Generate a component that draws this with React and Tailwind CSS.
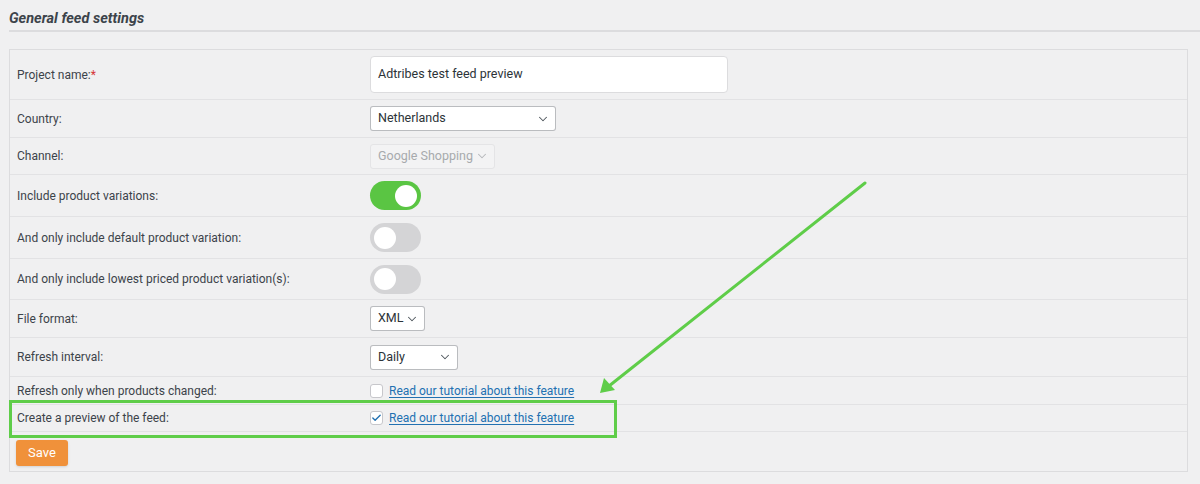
import { ChevronDown, Check } from 'lucide-react';

const Row = ({ label, h, children, required }) => (
  <div className={`flex items-center border-b border-[#e2e2e4] ${h}`}>
    <div className="w-[360px] shrink-0 pl-[7px] text-[12px] text-[#3c434a]">
      {label}
      {required && <span className="text-[#d63638]">*</span>}
    </div>
    <div className="flex items-center">{children}</div>
  </div>
);

const Select = ({ value, w, disabled }) => (
  <div
    className={`flex items-center justify-between h-[25px] rounded-[3px] border pl-[7px] pr-[5px] text-[12.5px] whitespace-nowrap ${w} ${
      disabled
        ? 'border-[#e4e4e6] bg-[#f3f3f4] text-[#a7aaad]'
        : 'border-[#8c8f94]/60 bg-white text-[#2c3338]'
    }`}
  >
    <span>{value}</span>
    <ChevronDown size={14} strokeWidth={1.8} className={disabled ? 'text-[#b5b7ba]' : 'text-[#50575e]'} />
  </div>
);

const Toggle = ({ on }) => (
  <div
    className={`flex items-center w-[51px] h-[29px] rounded-full px-[4px] ${
      on ? 'bg-[#5ac543] justify-end' : 'bg-[#d4d4d6] justify-start'
    }`}
  >
    <div className="w-[22px] h-[22px] rounded-full bg-white" />
  </div>
);

const TutorialCheck = ({ checked }) => (
  <div className="flex items-center gap-[6px]">
    <div className="w-[13px] h-[14px] rounded-[3px] border border-[#c7c7cb] bg-white flex items-center justify-center">
      {checked && <Check size={12} strokeWidth={3} className="text-[#2271b1]" />}
    </div>
    <a href="#" className="text-[12px] text-[#2271b1] underline underline-offset-2">
      Read our tutorial about this feature
    </a>
  </div>
);

export default function App() {
  return (
    <div className="relative w-[1200px] h-[484px] bg-[#f0f0f1] font-['Roboto',sans-serif] overflow-hidden">
      <div className="pl-[9px] pt-[9px]">
        <h2 className="text-[14.5px] font-bold italic text-[#3c434a] leading-[20px]">General feed settings</h2>
      </div>
      <div className="ml-[9px] mt-[1px] border-b-2 border-[#dcdcde]" />

      {/* settings table */}
      <div className="mt-[17px] ml-[9px] w-[1179px] border border-[#dcdcde] bg-[#f0f0f1]">
        <Row label="Project name:" required h="h-[50px]">
          <div className="w-[358px] h-[37px] rounded-[4px] border border-[#dcdcde] bg-white flex items-center pl-[7px] text-[12.5px] text-[#2c3338]">
            Adtribes test feed preview
          </div>
        </Row>
        <Row label="Country:" h="h-[38px]">
          <Select value="Netherlands" w="w-[186px]" />
        </Row>
        <Row label="Channel:" h="h-[37px]">
          <Select value="Google Shopping" w="w-[125px]" disabled />
        </Row>
        <Row label="Include product variations:" h="h-[42px]">
          <Toggle on />
        </Row>
        <Row label="And only include default product variation:" h="h-[42px]">
          <Toggle />
        </Row>
        <Row label="And only include lowest priced product variation(s):" h="h-[41px]">
          <Toggle />
        </Row>
        <Row label="File format:" h="h-[38px]">
          <Select value="XML" w="w-[55px]" />
        </Row>
        <Row label="Refresh interval:" h="h-[39px]">
          <Select value="Daily" w="w-[88px]" />
        </Row>
        <Row label="Refresh only when products changed:" h="h-[28px]">
          <TutorialCheck />
        </Row>
        <Row label="Create a preview of the feed:" h="h-[27px]">
          <TutorialCheck checked />
        </Row>
        <div className="h-[39px] pl-[6px] pt-[8px]">
          <button className="h-[26px] w-[52px] rounded-[3px] bg-[#f0913a] text-white text-[13px] shadow-sm">
            Save
          </button>
        </div>
      </div>

      {/* annotation overlay */}
      <svg className="absolute left-0 top-0 pointer-events-none" width="1200" height="484">
        <rect x="10.5" y="401.5" width="605" height="35" fill="none" stroke="#5fcd49" strokeWidth="3" />
        <line x1="865" y1="183" x2="609" y2="386" stroke="#5fcd49" strokeWidth="3" strokeLinecap="round" />
        <polygon points="600,393 604,378 615,390" fill="#5fcd49" />
      </svg>
    </div>
  );
}
